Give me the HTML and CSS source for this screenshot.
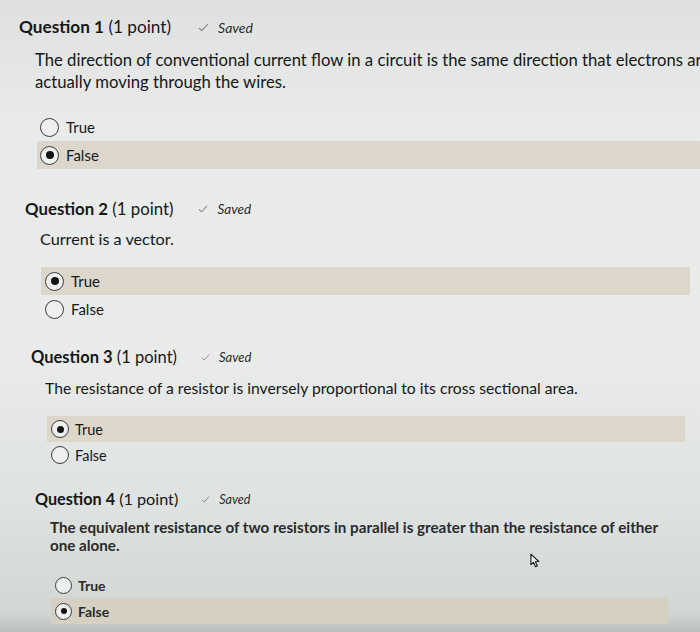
FILE: index.html
```html
<!DOCTYPE html>
<html lang="en">
<head>
<meta charset="utf-8">
<title>Quiz</title>
<link rel="stylesheet" href="styles.css">
</head>
<body>
<main class="page">
  <section class="q q1">
    <div class="q-head">
      <h2 class="q-title"><b>Question 1</b> (1 point)</h2>
      <span class="saved"><svg class="check" viewBox="0 0 12 10" width="11" height="9"><path d="M1 5.5 L4.2 8.5 L11 1" fill="none" stroke="#8a8d8c" stroke-width="1.4"/></svg>Saved</span>
    </div>
    <p class="q-text">The direction of conventional current flow in a circuit is the same direction that electrons are<br>actually moving through the wires.</p>
    <ul class="opts">
      <li class="opt"><span class="radio"></span>True</li>
      <li class="opt opt-sel"><span class="radio radio-on"></span>False</li>
    </ul>
  </section>

  <section class="q q2">
    <div class="q-head">
      <h2 class="q-title"><b>Question 2</b> (1 point)</h2>
      <span class="saved"><svg class="check" viewBox="0 0 12 10" width="10" height="8"><path d="M1 5.5 L4.2 8.5 L11 1" fill="none" stroke="#8a8d8c" stroke-width="1.4"/></svg>Saved</span>
    </div>
    <p class="q-text">Current is a vector.</p>
    <ul class="opts">
      <li class="opt opt-sel"><span class="radio radio-on"></span>True</li>
      <li class="opt"><span class="radio"></span>False</li>
    </ul>
  </section>

  <section class="q q3">
    <div class="q-head">
      <h2 class="q-title"><b>Question 3</b> (1 point)</h2>
      <span class="saved"><svg class="check" viewBox="0 0 12 10" width="9" height="7"><path d="M1 5.5 L4.2 8.5 L11 1" fill="none" stroke="#8a8d8c" stroke-width="1.4"/></svg>Saved</span>
    </div>
    <p class="q-text">The resistance of a resistor is inversely proportional to its cross sectional area.</p>
    <ul class="opts">
      <li class="opt opt-sel"><span class="radio radio-on"></span>True</li>
      <li class="opt"><span class="radio"></span>False</li>
    </ul>
  </section>

  <section class="q q4">
    <div class="q-head">
      <h2 class="q-title"><b>Question 4</b> (1 point)</h2>
      <span class="saved"><svg class="check" viewBox="0 0 12 10" width="9" height="7"><path d="M1 5.5 L4.2 8.5 L11 1" fill="none" stroke="#8a8d8c" stroke-width="1.4"/></svg>Saved</span>
    </div>
    <p class="q-text">The equivalent resistance of two resistors in parallel is greater than the resistance of either<br>one alone.</p>
    <ul class="opts">
      <li class="opt"><span class="radio"></span>True</li>
      <li class="opt opt-sel"><span class="radio radio-on"></span>False</li>
    </ul>
  </section>

  <svg class="cursor" viewBox="0 0 12 16" width="11" height="15"><path d="M1 1 L1 12.5 L3.8 10 L6 14.8 L8 13.9 L5.9 9.3 L9.6 9.1 Z" fill="#f2f2f2" stroke="#1a1a1a" stroke-width="1.2" stroke-linejoin="round"/></svg>
</main>
</body>
</html>
```

FILE: styles.css
```css
* { box-sizing: border-box; }
html, body { margin: 0; padding: 0; }
body {
  width: 700px;
  height: 632px;
  overflow: hidden;
  font-family: Lato, "Open Sans", "Liberation Sans", sans-serif;
  color: #161717;
  background: linear-gradient(180deg, #dfe1e0 0%, #e9ebea 20%, #eaecec 55%, #dee2e0 80%, #d1d7d4 97%, #b9bebc 100%);
}
.page {
  position: relative;
  height: 632px;
  padding-top: 17px;
  overflow: hidden;
}
.q { display: flex; flex-direction: column; }
.q-head { display: flex; align-items: center; }
.q-title { margin: 0; font-weight: 400; white-space: nowrap; }
.q-title b { font-weight: 700; }
.saved {
  display: flex;
  align-items: center;
  font-style: italic;
  color: #2a2b2b;
  white-space: nowrap;
}
.check { margin-right: 9px; }
.q-text { margin: 0; white-space: nowrap; }
.opts { list-style: none; margin: 0; padding: 0; }
.opt {
  display: flex;
  align-items: center;
  white-space: nowrap;
}
.opt-sel { background: #ddd6ca; }
.radio {
  flex: none;
  border: 1.6px solid #3a3b3b;
  border-radius: 50%;
  background: #eef0ef;
  display: flex;
  align-items: center;
  justify-content: center;
}
.radio-on::after {
  content: "";
  border-radius: 50%;
  background: #141414;
}

/* Question 1 */
.q1 { padding-left: 19px; }
.q1 .q-head { height: 20px; }
.q1 .q-title { font-size: 17.2px; line-height: 20px; }
.q1 .saved { font-size: 14px; margin-left: 27px; }
.q1 .q-text { margin: 12px 0 0 16px; font-size: 16.7px; line-height: 22px; }
.q1 .opts { margin: 20px 0 0 18px; }
.q1 .opt { height: 28px; font-size: 15px; padding-left: 3px; }
.q1 .radio { width: 19px; height: 19px; margin-right: 7px; }
.q1 .radio-on::after { width: 8px; height: 8px; }

/* Question 2 */
.q2 { padding-left: 25px; margin-top: 30px; }
.q2 .q-head { height: 20px; }
.q2 .q-title { font-size: 16.8px; line-height: 20px; }
.q2 .saved { font-size: 13.5px; margin-left: 25px; }
.q2 .q-text { margin: 10px 0 0 15px; font-size: 16.2px; line-height: 20px; }
.q2 .opts { margin: 18px 10px 0 16px; }
.q2 .opt { height: 28px; font-size: 15px; padding-left: 4px; }
.q2 .radio { width: 19px; height: 19px; margin-right: 7px; }
.q2 .radio-on::after { width: 8px; height: 8px; }

/* Question 3 */
.q3 { padding-left: 31px; margin-top: 24px; }
.q3 .q-head { height: 20px; }
.q3 .q-title { font-size: 16.5px; line-height: 20px; }
.q3 .saved { font-size: 13px; margin-left: 24px; }
.q3 .q-text { margin: 11px 0 0 14px; font-size: 15.7px; line-height: 20px; }
.q3 .opts { margin: 18px 15px 0 16px; }
.q3 .opt { height: 26px; font-size: 14.5px; padding-left: 4px; }
.q3 .radio { width: 18px; height: 18px; margin-right: 6px; }
.q3 .radio-on::after { width: 7px; height: 7px; }

/* Question 4 */
.q4 { padding-left: 35px; margin-top: 22px; }
.q4 .q-head { height: 18px; }
.q4 .q-title { font-size: 16.2px; line-height: 18px; }
.q4 .saved { font-size: 12.5px; margin-left: 23px; }
.q4 .q-text { margin: 10px 0 0 15px; font-size: 15.2px; line-height: 18px; font-weight: 700; color: #2a2b2b; }
.q4 .opts { margin: 18px 32px 0 16px; }
.q4 .opt { height: 26px; font-size: 14px; padding-left: 4px; font-weight: 700; color: #2a2b2b; }
.q4 .opt-sel { background: #d6d0c2; }
.q4 .radio { width: 17px; height: 17px; margin-right: 6px; }
.q4 .radio-on::after { width: 6px; height: 6px; }

.cursor {
  position: absolute;
  left: 530px;
  top: 553px;
}
```
